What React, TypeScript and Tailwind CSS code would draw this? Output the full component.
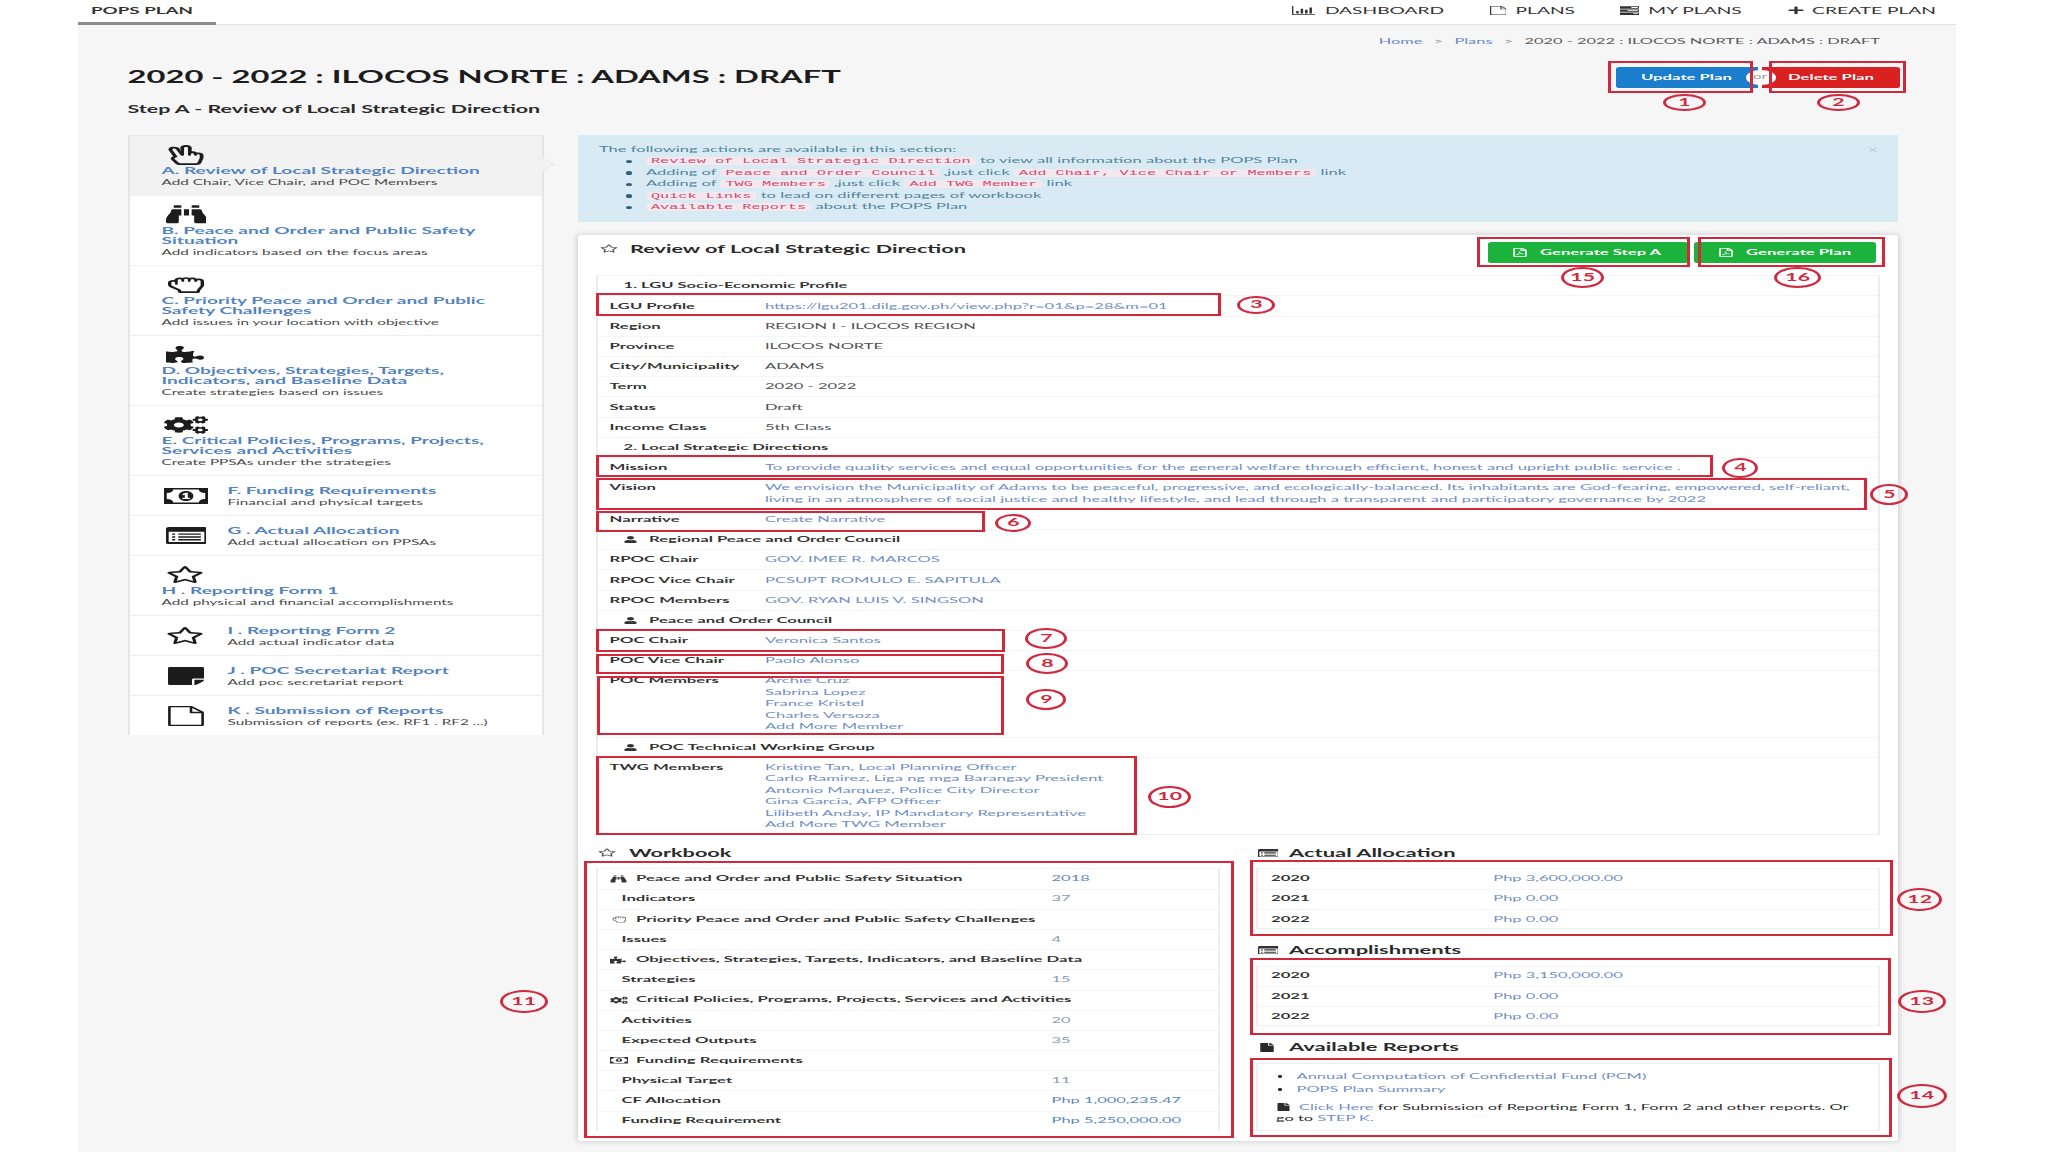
import type { ReactNode } from "react";
import {
  FaBinoculars,
  FaCogs,
  FaFile,
  FaPlus,
  FaPuzzlePiece,
  FaRegFilePdf,
  FaRegHandPeace,
  FaRegHandRock,
  FaRegStar,
  FaUser,
} from "react-icons/fa";

/* ---------- icons ---------- */

type IconProps = { className?: string };

const MoneyIcon = ({ className }: IconProps) => (
  <svg viewBox="0 0 22 16" preserveAspectRatio="none" className={className} fill="currentColor">
    <path fillRule="evenodd" d="M0 0h22v16H0zM4.500 1.500A3 3 0 0 1 1.400 5v6a3 3 0 0 1 3.100 3.500h13A3 3 0 0 1 20.600 11V5a3 3 0 0 1-3.100-3.500z" />
    <path fillRule="evenodd" d="M11 3c2.200 0 3.700 2.200 3.700 5s-1.500 5-3.700 5-3.700-2.200-3.700-5S8.800 3 11 3zm-.3 1.800L9 6.200l.7 1 .7-.5v3H9.200V11h3.700V9.700h-1V4.800z" />
  </svg>
);

const ListAltIcon = ({ className }: IconProps) => (
  <svg viewBox="0 0 20 16" preserveAspectRatio="none" className={className} fill="currentColor">
    <path fillRule="evenodd" d="M1.500 0h17A1.500 1.500 0 0 1 20 1.500v13a1.500 1.500 0 0 1-1.500 1.500h-17A1.500 1.500 0 0 1 0 14.500v-13A1.500 1.500 0 0 1 1.500 0zM1.300 4.500v9.700h17.400V4.500z" />
    <path d="M3 6h1.500v1.300H3zM3 8.700h1.500V10H3zM3 11.400h1.500v1.300H3zM6 6h11v1.300H6zM6 8.700h11V10H6zM6 11.400h11v1.300H6z" />
  </svg>
);

const NoteIcon = ({ className }: IconProps) => (
  <svg viewBox="0 0 18 18" preserveAspectRatio="none" className={className} fill="currentColor">
    <path d="M1 0h16a1 1 0 0 1 1 1v10.500h-5a1 1 0 0 0-1 1V18H1a1 1 0 0 1-1-1V1a1 1 0 0 1 1-1z" />
    <path d="M13.200 12.800H18c0 .8-.3 1.400-.8 1.900l-2.200 2.300c-.5.500-1.100.9-1.800 1z" />
  </svg>
);

const PageIcon = ({ className }: IconProps) => (
  <svg viewBox="0 0 18 20" preserveAspectRatio="none" className={className} fill="none" stroke="currentColor" strokeWidth="1.300" strokeLinejoin="round">
    <path d="M.7.7h11l5.600 5.600v13H.7z" />
    <path d="M11.500.9v5.600h5.700" />
  </svg>
);

const ChartIcon = ({ className }: IconProps) => (
  <svg viewBox="0 0 12 9" preserveAspectRatio="none" className={className} fill="currentColor">
    <path d="M0 0h.7v8.200H12V9H0zM2.200 5h1.300v2.600H2.200zM4.500 2.800h1.300v4.800H4.500zM6.800 3.800h1.300v3.800H6.800zM9.100 1.500h1.300v6.100H9.100z" />
  </svg>
);

const TasksIcon = ({ className }: IconProps) => (
  <svg viewBox="0 0 10 9" preserveAspectRatio="none" className={className} fill="currentColor">
    <path fillRule="evenodd" d="M0 .3h10v2.400H0zM6 1v.9h3.400V1zM0 3.400h10v2.400H0zM4 4.200v.8h5.400v-.8zM0 6.500h10v2.400H0zM7 7.300v.8h2.400v-.8z" />
  </svg>
);

/* ---------- top bar ---------- */

const NAV = [
  { label: "DASHBOARD", icon: <ChartIcon className="h-[9px] w-[11.500px]" /> },
  { label: "PLANS", icon: <PageIcon className="h-[9px] w-[8.500px]" /> },
  { label: "MY PLANS", icon: <TasksIcon className="h-[9px] w-[9.500px]" /> },
  { label: "CREATE PLAN", icon: <FaPlus className="h-[8.500px] w-[8px]" /> },
];

function TopBar() {
  return (
    <nav className="flex h-[25px] items-start justify-between border-b border-[#e2e2e2] bg-white pr-[9.500px]">
      <div className="h-[25px] w-[68.500px] border-b-[3px] border-[#8b8b8c] pl-[6.500px] pt-px text-[9.400px] leading-[19px] font-bold text-[#333]">
        POPS PLAN
      </div>
      <div className="flex gap-[22.700px] pt-px text-[9.600px] leading-[19px] text-[#333]">
        {NAV.map((n) => (
          <div key={n.label} className="flex items-center gap-[4.500px]">
            {n.icon}
            <span>{n.label}</span>
          </div>
        ))}
      </div>
    </nav>
  );
}

function PageHeader() {
  return (
    <header className="flex h-[110px] justify-between pr-[28px] pl-[24.750px]">
      <div>
        <h1 className="pt-[41px] text-[16.360px] leading-[22px] font-bold">2020 - 2022 : ILOCOS NORTE : ADAMS : DRAFT</h1>
        <h2 className="mt-[13.500px] text-[10.740px] leading-[14px] font-bold text-[#2a2a2a]">Step A - Review of Local Strategic Direction</h2>
      </div>
      <div className="flex flex-col items-end">
        <div className="mt-[9px] flex pr-[9.500px] text-[8.200px] leading-[14px]">
          <span className="text-[#6a89c9]">Home</span>
          <span className="w-[16px] text-center text-[#888]">&gt;</span>
          <span className="text-[#6a89c9]">Plans</span>
          <span className="w-[16px] text-center text-[#888]">&gt;</span>
          <span className="text-[#5a5a5a]">2020 - 2022 : ILOCOS NORTE : ADAMS : DRAFT</span>
        </div>
        <div className="relative mt-[19px] flex gap-[2px] text-[8.350px] leading-[20px] font-bold text-white">
          <div className="h-[20.500px] w-[71px] rounded-l-[2px] bg-[#1b7ecd] pl-[12.500px]">Update Plan</div>
          <div className="h-[20.500px] w-[68.500px] rounded-r-[2px] bg-[#db2022] pl-[13px]">Delete Plan</div>
          <div className="absolute top-[3px] left-[64.500px] h-[15px] w-[15px] rounded-full bg-white text-center text-[7.500px] leading-[14px] font-normal text-[#999]">
            or
          </div>
        </div>
      </div>
    </header>
  );
}

/* ---------- step navigation ---------- */

type Step = { title: string[]; text: string; icon: ReactNode; stacked?: boolean; active?: boolean };

const STEPS: Step[] = [
  { title: ["A. Review of Local Strategic Direction"], text: "Add Chair, Vice Chair, and POC Members", icon: <FaRegHandPeace className="size-[20px]" />, stacked: true, active: true },
  { title: ["B. Peace and Order and Public Safety", "Situation"], text: "Add indicators based on the focus areas", icon: <FaBinoculars className="size-[20.500px]" />, stacked: true },
  { title: ["C. Priority Peace and Order and Public", "Safety Challenges"], text: "Add issues in your location with objective", icon: <FaRegHandRock className="size-[18px]" />, stacked: true },
  { title: ["D. Objectives, Strategies, Targets,", "Indicators, and Baseline Data"], text: "Create strategies based on issues", icon: <FaPuzzlePiece className="size-[19px]" />, stacked: true },
  { title: ["E. Critical Policies, Programs, Projects,", "Services and Activities"], text: "Create PPSAs under the strategies", icon: <FaCogs className="size-[22px]" />, stacked: true },
  { title: ["F. Funding Requirements"], text: "Financial and physical targets", icon: <MoneyIcon className="h-[16px] w-[22px]" /> },
  { title: ["G . Actual Allocation"], text: "Add actual allocation on PPSAs", icon: <ListAltIcon className="h-[17px] w-[20.500px]" /> },
  { title: ["H . Reporting Form 1"], text: "Add physical and financial accomplishments", icon: <FaRegStar className="size-[19px]" />, stacked: true },
  { title: ["I . Reporting Form 2"], text: "Add actual indicator data", icon: <FaRegStar className="size-[19px]" /> },
  { title: ["J . POC Secretariat Report"], text: "Add poc secretariat report", icon: <NoteIcon className="h-[18px] w-[18px]" /> },
  { title: ["K . Submission of Reports"], text: "Submission of reports (ex. RF1 . RF2 ...)", icon: <PageIcon className="h-[20px] w-[18px]" /> },
];

function StepText({ step }: { step: Step }) {
  return (
    <div className="whitespace-nowrap">
      {step.title.map((line) => (
        <div key={line} className="text-[9.550px] leading-[10px] font-bold text-[#5384c0]">
          {line}
        </div>
      ))}
      <div className="text-[7.650px] leading-[12.500px] text-[#4a4a4a]">{step.text}</div>
    </div>
  );
}

function Steps() {
  return (
    <aside className="h-[600px] w-[208.200px] shrink-0 border-x border-t border-[#e6e6e8] bg-white">
      {STEPS.map((s) =>
        s.stacked ? (
          <div
            key={s.title[0]}
            className={
              s.title.length === 2
                ? "h-[70px] border-b border-[#f0f0f2] pl-[16px]"
                : s.active
                  ? "relative h-[60px] bg-[#f2f2f3] pl-[16px]"
                  : "h-[60px] border-b border-[#f0f0f2] pl-[16px]"
            }
          >
            <div className="flex h-[29.500px] w-[24px] items-center justify-center pt-[7.500px]">{s.icon}</div>
            <StepText step={s} />
            {s.active && <span className="absolute top-[24px] -right-[5px] size-[9px] rotate-45 border-t border-r border-[#ececee] bg-[#f2f2f3]" />}
          </div>
        ) : (
          <div key={s.title[0]} className="flex h-[40px] border-b border-[#f0f0f2] pl-[16px] last:border-b-0">
            <div className="mr-[9px] flex w-[24px] items-center justify-center">{s.icon}</div>
            <div className="pt-[9.800px]">
              <StepText step={s} />
            </div>
          </div>
        ),
      )}
    </aside>
  );
}

/* ---------- information message ---------- */

const Code = ({ children }: { children: ReactNode }) => (
  <code className="rounded-[2px] bg-[#f4e8ef] px-[2.500px] font-['Liberation_Mono',monospace] text-[7.620px] text-[#cf4a70]">{children}</code>
);

function Message() {
  return (
    <div className="flex h-[87px] justify-between bg-[#d8ebf5] pt-[9px] pr-[10.500px] pl-[10px] text-[8.270px] leading-[11.550px] whitespace-nowrap text-[#55839a]">
      <div>
        <p>The following actions are available in this section:</p>
        <ul className="list-none">
          {[
            <><Code>Review of Local Strategic Direction</Code>{" "}to view all information about the POPS Plan</>,
            <>Adding of <Code>Peace and Order Council</Code><span className="ml-[1.500px]">,just click</span> <Code>Add Chair, Vice Chair or Members</Code> link</>,
            <>Adding of <Code>TWG Members</Code><span className="ml-[1.500px]">,just click</span> <Code>Add TWG Member</Code> link</>,
            <><Code>Quick Links</Code>{" "}to lead on different pages of workbook</>,
            <><Code>Available Reports</Code>{" "}about the POPS Plan</>,
          ].map((item, i) => (
            <li key={i} className="flex h-[11.550px] items-center pl-[14px]">
              <span className="mr-[7px] h-[3.500px] w-[2.500px] rounded-full bg-[#31627c]" />
              <span className="whitespace-pre">{item}</span>
            </li>
          ))}
        </ul>
      </div>
      <span className="text-[9px] text-[#b4cad5]">×</span>
    </div>
  );
}

/* ---------- profile table ---------- */

type Row = { head?: string; person?: boolean; label?: string; lines?: string[]; link?: boolean };

const PROFILE: Row[] = [
  { head: "1. LGU Socio-Economic Profile" },
  { label: "LGU Profile", lines: ["https://lgu201.dilg.gov.ph/view.php?r=01&p=28&m=01"], link: true },
  { label: "Region", lines: ["REGION I - ILOCOS REGION"] },
  { label: "Province", lines: ["ILOCOS NORTE"] },
  { label: "City/Municipality", lines: ["ADAMS"] },
  { label: "Term", lines: ["2020 - 2022"] },
  { label: "Status", lines: ["Draft"] },
  { label: "Income Class", lines: ["5th Class"] },
  { head: "2. Local Strategic Directions" },
  { label: "Mission", lines: ["To provide quality services and equal opportunities for the general welfare through efficient, honest and upright public service ."], link: true },
  {
    label: "Vision",
    lines: [
      "We envision the Municipality of Adams to be peaceful, progressive, and ecologically-balanced. Its inhabitants are God-fearing, empowered, self-reliant,",
      "living in an atmosphere of social justice and healthy lifestyle, and lead through a transparent and participatory governance by 2022",
    ],
    link: true,
  },
  { label: "Narrative", lines: ["Create Narrative"], link: true },
  { head: "Regional Peace and Order Council", person: true },
  { label: "RPOC Chair", lines: ["GOV. IMEE R. MARCOS"], link: true },
  { label: "RPOC Vice Chair", lines: ["PCSUPT ROMULO E. SAPITULA"], link: true },
  { label: "RPOC Members", lines: ["GOV. RYAN LUIS V. SINGSON"], link: true },
  { head: "Peace and Order Council", person: true },
  { label: "POC Chair", lines: ["Veronica Santos"], link: true },
  { label: "POC Vice Chair", lines: ["Paolo Alonso"], link: true },
  { label: "POC Members", lines: ["Archie Cruz", "Sabrina Lopez", "France Kristel", "Charles Versoza", "Add More Member"], link: true },
  { head: "POC Technical Working Group", person: true },
  {
    label: "TWG Members",
    lines: [
      "Kristine Tan, Local Planning Officer",
      "Carlo Ramirez, Liga ng mga Barangay President",
      "Antonio Marquez, Police City Director",
      "Gina Garcia, AFP Officer",
      "Lilibeth Anday, IP Mandatory Representative",
      "Add More TWG Member",
    ],
    link: true,
  },
];

function ProfileTable() {
  return (
    <div className="mx-[9px] h-[560px] border-x border-b border-[#ededf0] text-[8.270px] leading-[11.500px] whitespace-nowrap">
      {PROFILE.map((r, i) => (
        <div key={i} className="flex border-t border-[#f5f5f7] pt-[4.100px] pb-[3.600px]">
          {r.head ? (
            <div className={r.person ? "flex items-center pl-[13px] text-[8.370px] font-bold text-[#333]" : "pl-[12.300px] font-bold text-[#333]"}>
              {r.person && <FaUser className="mr-[5.500px] h-[7px] w-[6.500px]" />}
              {r.head}
            </div>
          ) : (
            <>
              <div className="w-[83px] pl-[5.300px] text-[8.350px] font-bold text-[#333]">{r.label}</div>
              <div className={r.link ? "text-[#718fc6]" : "text-[#505050]"}>
                {r.lines?.map((l) => <div key={l}>{l}</div>)}
              </div>
            </>
          )}
        </div>
      ))}
    </div>
  );
}

/* ---------- lower sections ---------- */

const WORKBOOK: { icon?: ReactNode; label: string; value?: string; strong?: boolean }[] = [
  { icon: <FaBinoculars className="h-[8px] w-[8.500px]" />, label: "Peace and Order and Public Safety Situation", value: "2018", strong: true },
  { label: "Indicators", value: "37" },
  { icon: <FaRegHandRock className="h-[7px] w-[7.500px] text-[#777]" />, label: "Priority Peace and Order and Public Safety Challenges" },
  { label: "Issues", value: "4" },
  { icon: <FaPuzzlePiece className="h-[8px] w-[8px]" />, label: "Objectives, Strategies, Targets, Indicators, and Baseline Data" },
  { label: "Strategies", value: "15" },
  { icon: <FaCogs className="h-[8.500px] w-[9px]" />, label: "Critical Policies, Programs, Projects, Services and Activities" },
  { label: "Activities", value: "20" },
  { label: "Expected Outputs", value: "35" },
  { icon: <MoneyIcon className="h-[6.500px] w-[9px]" />, label: "Funding Requirements" },
  { label: "Physical Target", value: "11" },
  { label: "CF Allocation", value: "Php 1,000,235.47", strong: true },
  { label: "Funding Requirement", value: "Php 5,250,000.00", strong: true },
];

const SectionTitle = ({ icon, children }: { icon: ReactNode; children: ReactNode }) => (
  <h3 className="flex h-[16px] items-center text-[10.850px] leading-[16px] font-bold text-[#2a2a2a]">
    <span className="mr-[5px] flex w-[11px] shrink-0 justify-center">{icon}</span>
    {children}
  </h3>
);

function Workbook() {
  return (
    <section className="w-[312px]">
      <SectionTitle icon={<FaRegStar className="size-[9px] text-[#555]" />}>Workbook</SectionTitle>
      <div className="mt-[7.600px] h-[262.600px] border-x border-[#efeff1]">
        {WORKBOOK.map((w) => (
          <div key={w.label} className="flex h-[20.200px] items-center border-t border-[#f5f5f7]">
            <div className="flex w-[226.300px] shrink-0 items-center text-[8.370px] font-bold text-[#333]">
              {w.icon ? <span className="mr-[3.500px] ml-[5px] flex w-[10px] shrink-0 justify-center">{w.icon}</span> : <span className="w-[11.300px]" />}
              {w.label}
            </div>
            <span className={w.strong ? "text-[#5a86c4]" : "text-[#8a9bb5]"}>{w.value}</span>
          </div>
        ))}
      </div>
    </section>
  );
}

function Amounts({ title, first }: { title: string; first: string }) {
  return (
    <section>
      <SectionTitle icon={<ListAltIcon className="h-[8.500px] w-[10.500px] text-[#333]" />}>
        <span className="text-[10.980px]">{title}</span>
      </SectionTitle>
      <div className="mt-[7.600px] h-[60.600px] border border-t-0 border-[#efeff1]">
        {[["2020", first], ["2021", "Php 0.00"], ["2022", "Php 0.00"]].map(([year, amount]) => (
          <div key={year} className="flex h-[20.200px] items-center border-t border-[#f5f5f7] pl-[6px]">
            <span className="w-[111.200px] text-[8.350px] font-bold text-[#333]">{year}</span>
            <span className="text-[#718fc6]">{amount}</span>
          </div>
        ))}
      </div>
    </section>
  );
}

function Reports() {
  return (
    <section>
      <SectionTitle icon={<FaFile className="h-[9px] w-[9px]" />}>
        <span className="text-[10.980px]">Available Reports</span>
      </SectionTitle>
      <div className="mt-[7.600px] h-[68px] border border-[#efeff1] pt-[6.500px] pl-[8.500px]">
        <ul className="leading-[13px] text-[#718fc6]">
          {["Annual Computation of Confidential Fund (PCM)", "POPS Plan Summary"].map((t) => (
            <li key={t} className="flex items-center">
              <span className="mr-[7px] ml-[1.300px] h-[3px] w-[2px] rounded-full bg-[#222]" />
              {t}
            </li>
          ))}
        </ul>
        <div className="mt-[5.500px] leading-[11px] text-[#2c2c2c]">
          <div className="flex items-center">
            <FaFile className="mr-[3.500px] ml-[0.500px] h-[8px] w-[7.500px]" />
            <span className="text-[#718fc6]">Click Here</span>
            <span className="whitespace-pre"> for Submission of Reporting Form 1, Form 2 and other reports. Or</span>
          </div>
          <div>
            go to <span className="text-[#718fc6]">STEP K.</span>
          </div>
        </div>
      </div>
    </section>
  );
}

function Card() {
  return (
    <div className="mt-[12.500px] h-[906px] rounded-[2px] bg-white shadow-[0_0_4px_1px_rgba(0,0,0,0.14)]">
      <div className="flex h-[40.800px] justify-between pr-[11.500px] pl-[9.500px]">
        <div className="pt-[6px]">
          <SectionTitle icon={<FaRegStar className="size-[9px] text-[#555]" />}>Review of Local Strategic Direction</SectionTitle>
        </div>
        <div className="flex gap-[3.500px] pt-[7.500px] text-[8.350px] font-bold text-white">
          <div className="flex h-[21px] w-[99.500px] items-center rounded-[2px] bg-[#1bb33b] pl-[11.500px]">
            <FaRegFilePdf className="mr-[6px] h-[9px] w-[8px]" />
            Generate Step A
          </div>
          <div className="flex h-[21px] w-[90.500px] items-center rounded-[2px] bg-[#1bb33b] pl-[11.500px]">
            <FaRegFilePdf className="mr-[6px] h-[9px] w-[8px]" />
            Generate Plan
          </div>
        </div>
      </div>
      <ProfileTable />
      <div className="mx-[9px] flex justify-between pt-[9.500px] text-[8.220px] leading-[11.500px] whitespace-nowrap">
        <Workbook />
        <div className="flex w-[312px] flex-col gap-[13px]">
          <Amounts title="Actual Allocation" first="Php 3,600,000.00" />
          <Amounts title="Accomplishments" first="Php 3,150,000.00" />
          <Reports />
        </div>
      </div>
    </div>
  );
}

/* ---------- numbered call-outs laid over the page ---------- */

const FRAMES = [
  "left-[1608px] top-[61px] h-[32px] w-[145px]",
  "left-[1769px] top-[61px] h-[32px] w-[137px]",
  "left-[596px] top-[293px] h-[23px] w-[625px]",
  "left-[596px] top-[455px] h-[22px] w-[1117px]",
  "left-[596px] top-[478px] h-[32px] w-[1271px]",
  "left-[596px] top-[511px] h-[21px] w-[389px]",
  "left-[596px] top-[629px] h-[23px] w-[409px]",
  "left-[596px] top-[654px] h-[20px] w-[408px]",
  "left-[597px] top-[676px] h-[59px] w-[407px]",
  "left-[596px] top-[756px] h-[79px] w-[541px]",
  "left-[584px] top-[861px] h-[277px] w-[650px]",
  "left-[1250px] top-[860px] h-[76px] w-[643px]",
  "left-[1250px] top-[958px] h-[77px] w-[641px]",
  "left-[1250px] top-[1058px] h-[79px] w-[642px]",
  "left-[1477px] top-[237px] h-[30px] w-[213px]",
  "left-[1698px] top-[237px] h-[30px] w-[187px]",
];

const BADGES = [
  "left-[1663px] top-[94px] h-[17px] w-[43px]",
  "left-[1817px] top-[94px] h-[17px] w-[43px]",
  "left-[1237px] top-[296px] h-[18px] w-[38px]",
  "left-[1722px] top-[458px] h-[20px] w-[36px]",
  "left-[1870px] top-[484px] h-[21px] w-[38px]",
  "left-[995px] top-[514px] h-[18px] w-[36px]",
  "left-[1025px] top-[628px] h-[21px] w-[42px]",
  "left-[1026px] top-[653px] h-[21px] w-[42px]",
  "left-[1026px] top-[689px] h-[21px] w-[40px]",
  "left-[1148px] top-[786px] h-[22px] w-[43px]",
  "left-[500px] top-[990px] h-[23px] w-[48px]",
  "left-[1897px] top-[888px] h-[23px] w-[45px]",
  "left-[1898px] top-[990px] h-[23px] w-[48px]",
  "left-[1897px] top-[1084px] h-[24px] w-[50px]",
  "left-[1561px] top-[267px] h-[21px] w-[43px]",
  "left-[1774px] top-[267px] h-[21px] w-[47px]",
];

function Callouts() {
  return (
    <>
      {FRAMES.map((c) => (
        <div key={c} className={`absolute border-x-[3px] border-y-2 border-[#d3283a] ${c}`} />
      ))}
      {BADGES.map((c, i) => (
        <div key={c} className={`absolute flex items-center justify-center rounded-[50%] border-x-[3px] border-y-2 border-[#cf2a40] ${c}`}>
          <span className="inline-block -translate-y-px scale-x-[1.850] text-[11.500px] leading-none font-bold text-[#cf2a40]">{i + 1}</span>
        </div>
      ))}
    </>
  );
}

export default function App() {
  return (
    <div className="relative h-[1152px] w-[2048px] overflow-hidden bg-white pl-[78px] font-['Lato',sans-serif] text-[#1c1c1d]">
      <div className="h-[1152px] w-[938.500px] origin-top-left scale-x-200 bg-[#f6f6f7]">
        <TopBar />
        <PageHeader />
        <main className="flex gap-[17.550px] pl-[24.750px]">
          <Steps />
          <div className="w-[660px] shrink-0">
            <Message />
            <Card />
          </div>
        </main>
      </div>
      <Callouts />
    </div>
  );
}
